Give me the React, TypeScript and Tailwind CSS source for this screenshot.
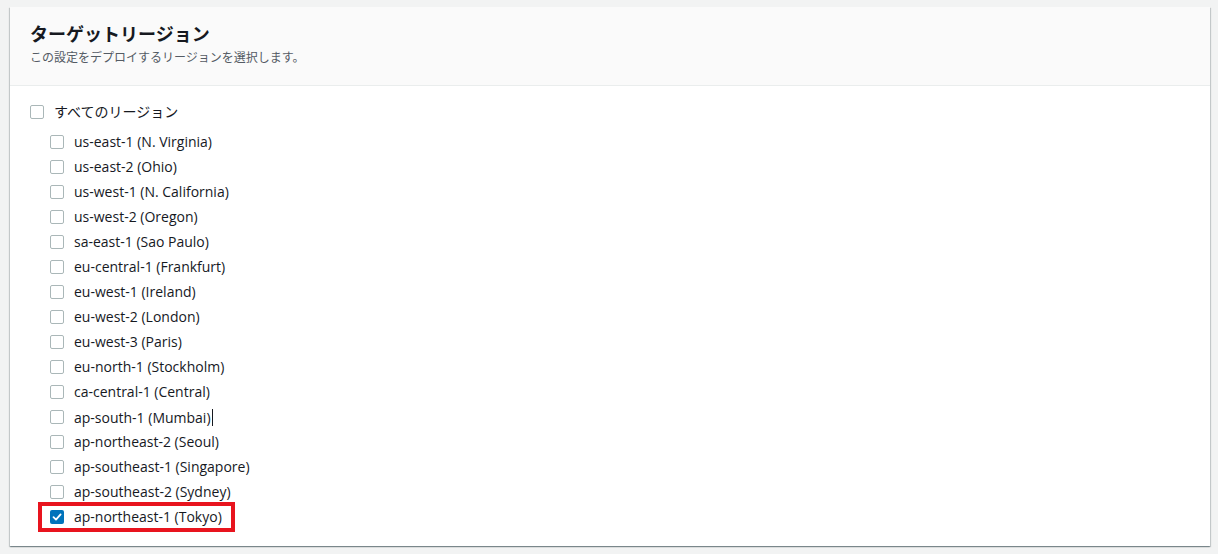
import React from 'react'

const REGIONS = [
  'us-east-1 (N. Virginia)',
  'us-east-2 (Ohio)',
  'us-west-1 (N. California)',
  'us-west-2 (Oregon)',
  'sa-east-1 (Sao Paulo)',
  'eu-central-1 (Frankfurt)',
  'eu-west-1 (Ireland)',
  'eu-west-2 (London)',
  'eu-west-3 (Paris)',
  'eu-north-1 (Stockholm)',
  'ca-central-1 (Central)',
  'ap-south-1 (Mumbai)',
  'ap-northeast-2 (Seoul)',
  'ap-southeast-1 (Singapore)',
  'ap-southeast-2 (Sydney)',
]

function Box({ checked }: { checked?: boolean }) {
  if (checked) {
    return (
      <span className="flex h-[14px] w-[14px] shrink-0 items-center justify-center rounded-[2px] bg-[#0073bb]">
        <svg width="10" height="10" viewBox="0 0 10 10" fill="none">
          <path d="M1.5 5.2 L4 7.6 L8.6 2.4" stroke="white" strokeWidth="1.8" strokeLinecap="round" strokeLinejoin="round" />
        </svg>
      </span>
    )
  }
  return <span className="h-[14px] w-[14px] shrink-0 rounded-[2px] border border-[#aab7b8] bg-white" />
}

function Row({ label, checked, caret }: { label: string; checked?: boolean; caret?: boolean }) {
  return (
    <div className="flex h-[25px] items-center">
      <Box checked={checked} />
      <span className="ml-[10px] text-[14px] text-[#16191f]">
        {label}
        {caret && <span className="ml-[1px] inline-block h-[17px] w-px translate-y-[3px] bg-[#16191f]" />}
      </span>
    </div>
  )
}

export default function App() {
  return (
    <div
      className="min-h-[554px] bg-[#f2f3f3] pt-[7px] pl-[10px] pr-[8px]"
      style={{ fontFamily: '"Open Sans", "Noto Sans CJK JP", sans-serif' }}
    >
      <div className="bg-white shadow-[0_1px_1px_0_rgba(0,28,36,0.3),1px_1px_1px_0_rgba(0,28,36,0.15),-1px_1px_1px_0_rgba(0,28,36,0.15)]">
        {/* header */}
        <div className="border-b border-[#eaeded] bg-[#fafafa] px-[20px] pt-[16px] pb-[19px]">
          <h2 className="text-[18px] leading-[22px] font-bold text-[#16191f]">ターゲットリージョン</h2>
          <p className="mt-[5px] text-[12px] leading-[16px] text-[#545b64]">この設定をデプロイするリージョンを選択します。</p>
        </div>

        {/* body */}
        <div className="px-[20px] pt-[13px] pb-[17px]">
          <div className="flex h-[25px] items-center">
            <Box />
            <span className="ml-[10px] text-[14px] text-[#16191f]">すべてのリージョン</span>
          </div>
          <div className="mt-[5px] pl-[20px]">
            {REGIONS.map(r => (
              <Row key={r} label={r} caret={r === 'ap-south-1 (Mumbai)'} />
            ))}
            <div className="relative">
              <Row label="ap-northeast-1 (Tokyo)" checked />
              {/* red highlight */}
              <div className="pointer-events-none absolute left-[-12px] top-[-2px] h-[30px] w-[197px] border-4 border-[#e8141e]" />
            </div>
          </div>
        </div>
      </div>
    </div>
  )
}
